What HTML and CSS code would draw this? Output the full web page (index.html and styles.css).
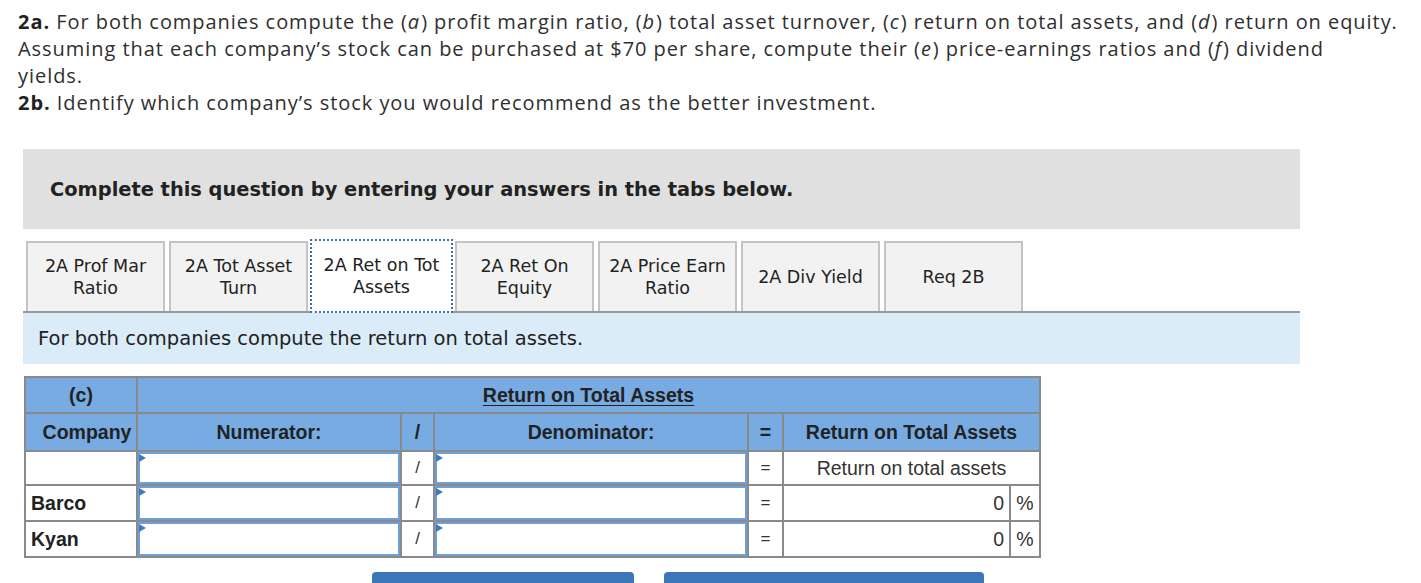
FILE: index.html
```html
<!DOCTYPE html>
<html>
<head>
<meta charset="utf-8">
<link rel="stylesheet" href="styles.css">
</head>
<body>
<div class="prompt">
  <p><b>2a.</b> For both companies compute the (<i>a</i>) profit margin ratio, (<i>b</i>) total asset turnover, (<i>c</i>) return on total assets, and (<i>d</i>) return on equity.<br>Assuming that each company’s stock can be purchased at $70 per share, compute their (<i>e</i>) price-earnings ratios and (<i>f</i>) dividend<br>yields.</p>
  <p><b>2b.</b> Identify which company’s stock you would recommend as the better investment.</p>
</div>
<div class="panel">
  <div class="instructions">Complete this question by entering your answers in the tabs below.</div>
  <div class="tabs">
    <div class="tab">2A Prof Mar<br>Ratio</div>
    <div class="tab">2A Tot Asset<br>Turn</div>
    <div class="tab active">2A Ret on Tot<br>Assets</div>
    <div class="tab">2A Ret On<br>Equity</div>
    <div class="tab">2A Price Earn<br>Ratio</div>
    <div class="tab">2A Div Yield</div>
    <div class="tab">Req 2B</div>
  </div>
  <div class="info">For both companies compute the return on total assets.</div>
  <table class="grid">
    <colgroup>
      <col class="c-co"><col class="c-num"><col class="c-op"><col class="c-den"><col class="c-eq"><col class="c-val"><col class="c-pct">
    </colgroup>
    <tr class="head h1">
      <th>(c)</th>
      <th colspan="6"><u>Return on Total Assets</u></th>
    </tr>
    <tr class="head h2">
      <th class="cohead">Company</th>
      <th>Numerator:</th>
      <th>/</th>
      <th>Denominator:</th>
      <th>=</th>
      <th colspan="2">Return on Total Assets</th>
    </tr>
    <tr class="r1">
      <td></td>
      <td class="in"><div class="box"></div></td>
      <td class="op">/</td>
      <td class="in"><div class="box"></div></td>
      <td class="op">=</td>
      <td colspan="2" class="label">Return on total assets</td>
    </tr>
    <tr>
      <td class="co">Barco</td>
      <td class="in"><div class="box"></div></td>
      <td class="op">/</td>
      <td class="in"><div class="box"></div></td>
      <td class="op">=</td>
      <td class="num">0</td>
      <td class="pct">%</td>
    </tr>
    <tr>
      <td class="co">Kyan</td>
      <td class="in"><div class="box"></div></td>
      <td class="op">/</td>
      <td class="in"><div class="box"></div></td>
      <td class="op">=</td>
      <td class="num">0</td>
      <td class="pct">%</td>
    </tr>
  </table>
  <div class="buttons">
    <div class="btn prev"></div>
    <div class="btn next"></div>
  </div>
</div>
</body>
</html>
```
FILE: styles.css
```css
html, body {
  margin: 0;
  padding: 0;
  background: #fff;
  overflow: hidden;
}
body {
  width: 1421px;
  height: 583px;
}
.prompt {
  padding: 8px 0 0 18px;
  font-family: "Open Sans", "Liberation Sans", sans-serif;
  font-size: 20px;
  letter-spacing: 0.95px;
  line-height: 27px;
  color: #2f2f2f;
  width: 1400px;
  white-space: nowrap;
}
.prompt p {
  margin: 0;
}
.prompt i {
  padding-right: 1px;
}
.prompt b {
  font-weight: 700;
  color: #222;
}
.panel {
  margin: 33px 0 0 23px;
  width: 1277px;
}
.instructions {
  height: 80px;
  background: #e0e0e0;
  box-sizing: border-box;
  padding-left: 27px;
  display: flex;
  align-items: center;
  font-family: "DejaVu Sans", Verdana, sans-serif;
  font-weight: 700;
  font-size: 19.4px;
  color: #222;
}
.tabs {
  display: flex;
  gap: 4px;
  margin-top: 12px;
  padding-left: 3px;
  border-bottom: 2px solid #999;
  height: 70px;
}
.tab {
  width: 139px;
  box-sizing: border-box;
  border: 2px solid #c4c4c4;
  border-bottom: none;
  background: #f2f2f2;
  display: flex;
  align-items: center;
  justify-content: center;
  text-align: center;
  font-family: "DejaVu Sans", Verdana, sans-serif;
  font-size: 17.5px;
  line-height: 22px;
  color: #222;
  white-space: nowrap;
}
.tab.active {
  width: 143px;
  margin: -2px -2px -2px -2px;
  background: #fff;
  border: 2px dotted #3d6fb6;
  position: relative;
  z-index: 1;
}
.info {
  height: 51px;
  background: #dbecf9;
  box-sizing: border-box;
  padding-left: 15px;
  display: flex;
  align-items: center;
  font-family: "DejaVu Sans", Verdana, sans-serif;
  font-size: 19.5px;
  color: #222;
}
.grid {
  margin: 12px 0 0 1px;
  border-collapse: collapse;
  table-layout: fixed;
  width: 1016px;
  font-family: "Liberation Sans", Arial, sans-serif;
  font-size: 19.5px;
  line-height: 22px;
  color: #222;
}
.c-co { width: 112px; }
.c-num { width: 264px; }
.c-op { width: 33px; }
.c-den { width: 314px; }
.c-eq { width: 35px; }
.c-val { width: 227px; }
.c-pct { width: 30px; }
.grid th, .grid td {
  border: 2px solid #8a8a8a;
  padding: 0;
}
.grid tr.head th {
  background: #77abe2;
  font-weight: 700;
  text-align: center;
}
.grid tr.head th.cohead {
  padding-left: 12px;
}
.grid tr.h1 th { height: 34px; }
.grid tr.h2 th { height: 36px; }
.grid tr.head th u {
  text-decoration-thickness: 1px;
  text-underline-offset: 3px;
}
.grid td.co {
  font-weight: 700;
  padding-left: 5px;
}
.grid td.op {
  text-align: center;
  color: #333;
  font-size: 17px;
}
.grid td.label {
  text-align: center;
  color: #333;
}
.grid td.num {
  text-align: right;
  padding-right: 5px;
  color: #333;
}
.grid td.pct {
  text-align: center;
  color: #333;
}
.box {
  position: relative;
  height: 34px;
  box-sizing: border-box;
  border: 2px solid #6f9fd8;
  background: #fff;
}
.r1 .box { height: 32px; }
.box::before {
  content: "";
  position: absolute;
  left: -1px;
  top: 0;
  border-left: 7px solid #3f7ac0;
  border-top: 4.5px solid transparent;
  border-bottom: 4.5px solid transparent;
}
.buttons {
  display: flex;
  gap: 30px;
  margin: 14px 0 0 349px;
}
.btn {
  height: 30px;
  background: #3b76b8;
  border-radius: 4px 4px 0 0;
}
.btn.prev { width: 262px; }
.btn.next { width: 320px; }
```
